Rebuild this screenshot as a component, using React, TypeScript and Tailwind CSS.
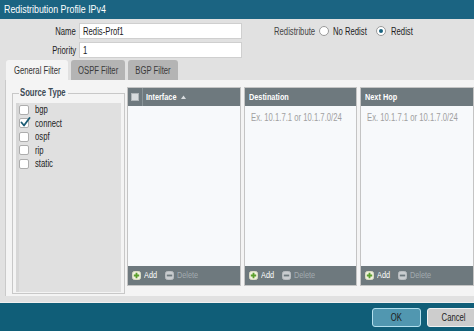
import React from "react";

function T({ children, o = "origin-left", className = "" }: { children: React.ReactNode; o?: string; className?: string }) {
  return <span className={`inline-block whitespace-nowrap scale-x-[0.77] ${o} ${className}`}>{children}</span>;
}

function Check({ checked }: { checked?: boolean }) {
  return (
    <div className="relative w-[10px] h-[10px] bg-white border border-[#adadad] rounded-[2px] shrink-0">
      {checked && (
        <svg className="absolute left-[0px] top-[-2px]" width="11" height="11" viewBox="0 0 11 11">
          <path d="M1.5 5.5 L4 8.5 L9.5 1" fill="none" stroke="#1b5c74" strokeWidth="1.8" strokeLinecap="round" strokeLinejoin="round" />
        </svg>
      )}
    </div>
  );
}

function Radio({ on }: { on?: boolean }) {
  return (
    <div className="w-[10px] h-[10px] rounded-full bg-white border border-[#9a9a9a] flex items-center justify-center shrink-0">
      {on && <div className="w-[4px] h-[4px] rounded-full bg-[#1a6480]" />}
    </div>
  );
}

function AddIcon() {
  return (
    <svg width="9" height="9" viewBox="0 0 9 9" className="shrink-0">
      <rect x="0.5" y="0.5" width="8" height="8" rx="2" fill="#f1f1de" stroke="#dcdcc4" />
      <path d="M4.5 1.8 V7.2 M1.8 4.5 H7.2" stroke="#5a9f2c" strokeWidth="1.8" />
    </svg>
  );
}

function DelIcon() {
  return (
    <svg width="9" height="9" viewBox="0 0 9 9" className="shrink-0">
      <rect x="0.5" y="0.5" width="8" height="8" rx="2" fill="#c9cdd0" stroke="#b9bdc0" />
      <path d="M1.8 4.5 H7.2" stroke="#6e797e" strokeWidth="1.8" />
    </svg>
  );
}

function Footer() {
  return (
    <div className="h-[19px] bg-[#6e797e] flex items-center pl-[4px] text-[9.5px]">
      <AddIcon />
      <span className="ml-[3px] w-[13px] inline-block">
        <T className="text-white">Add</T>
      </span>
      <span className="ml-[8px] inline-flex"><DelIcon /></span>
      <span className="ml-[3px] w-[20px] inline-block">
        <T className="text-[#a3abaf]">Delete</T>
      </span>
    </div>
  );
}

function Table({ title, placeholder, first, grow }: { title: string; placeholder?: string; first?: boolean; grow?: boolean }) {
  return (
    <div className={`${grow ? "flex-1 min-w-0" : first ? "w-[114px] shrink-0" : "w-[113px] shrink-0"} h-[199px] flex flex-col border border-[#c4c4c4] bg-[#f7f9fb] overflow-hidden`}>
      <div className="h-[18px] bg-[#6e797e] flex items-center text-white font-bold text-[9.5px]">
        {first ? (
          <>
            <div className="w-[8px] h-[8px] bg-[#d8dcde] border border-[#b0b6b9] ml-[3px] shrink-0" />
            <div className="w-[1px] h-[18px] bg-[#8a9599] ml-[3px] shrink-0" />
            <span className="ml-[3px] w-[30px] inline-block">
              <T>{title}</T>
            </span>
            <svg className="ml-[5px]" width="5" height="4" viewBox="0 0 5 4">
              <path d="M0 4 L2.5 0.5 L5 4 Z" fill="#d9dde0" />
            </svg>
          </>
        ) : (
          <span className="ml-[4px]">
            <T>{title}</T>
          </span>
        )}
      </div>
      <div className="flex-1 pl-[6px] pt-[5px] text-[10px] text-[#a0a0a0] leading-[14px]">
        {placeholder && <T>{placeholder}</T>}
      </div>
      <Footer />
    </div>
  );
}

export default function App() {
  return (
    <div className="w-[474px] h-[331px] bg-[#e1e1e1] flex flex-col overflow-hidden font-['Liberation_Sans',Arial,sans-serif]">
      <div className="h-[19px] bg-[#1b6482] text-white text-[11.5px] flex items-center pl-[4px] shrink-0">
        <T>Redistribution Profile IPv4</T>
      </div>
      <div className="flex mt-[4px] shrink-0">
        <div className="grid grid-cols-[76px_163px] gap-x-[3px] gap-y-[3px] text-[10px] text-[#222]">
          <div className="h-[16px] flex items-center justify-end">
            <T o="origin-right">Name</T>
          </div>
          <div className="h-[16px] bg-white border border-[#cfcfcf] flex items-center pl-[3px]">
            <T>Redis-Prof1</T>
          </div>
          <div className="h-[16px] flex items-center justify-end">
            <T o="origin-right">Priority</T>
          </div>
          <div className="h-[16px] bg-white border border-[#cfcfcf] flex items-center pl-[3px]">
            <T>1</T>
          </div>
        </div>
        <div className="ml-[32px] h-[16px] flex items-center text-[10px] text-[#222]">
          <span className="w-[41px] inline-block">
            <T className="text-[#444]">Redistribute</T>
          </span>
          <span className="ml-[4px] inline-flex"><Radio /></span>
          <span className="ml-[4px] w-[33px] inline-block">
            <T>No Redist</T>
          </span>
          <span className="ml-[10px] inline-flex"><Radio on /></span>
          <span className="ml-[5px] w-[21px] inline-block">
            <T>Redist</T>
          </span>
        </div>
      </div>
      <div className="h-[20px] mt-[2px] flex items-end pl-[6px] gap-[3px] text-[10px] shrink-0">
        <div className="w-[62px] h-[20px] bg-[#f4f4f4] rounded-t-[3px] flex items-center justify-center text-[#333]">
          <T o="origin-center">General Filter</T>
        </div>
        <div className="w-[54px] h-[20px] bg-[#b4b4b4] rounded-t-[3px] flex items-center justify-center text-[#3a3a3a]">
          <T o="origin-center">OSPF Filter</T>
        </div>
        <div className="w-[50px] h-[20px] bg-[#b4b4b4] rounded-t-[3px] flex items-center justify-center text-[#3a3a3a]">
          <T o="origin-center">BGP Filter</T>
        </div>
      </div>
      <div className="h-[216px] ml-[5px] bg-[#f4f4f4] border-l border-[#cacaca] flex pl-[6px] pt-[7px] shrink-0">
        <fieldset className="w-[113px] shrink-0 h-[207px] border border-[#c8c8c8] px-[3px] pt-[4px] pb-[1px]">
          <legend className="ml-[3px] px-[1px] text-[10px] leading-[12px] font-bold text-[#3c4a55]">
            <span className="w-[47px] inline-block">
              <T>Source Type</T>
            </span>
          </legend>
          <div className="h-[189px] bg-[#e0e0e0] border-l-[3px] border-[#d7d7d7] text-[10px] text-[#222]">
            {[
              ["bgp", false],
              ["connect", true],
              ["ospf", false],
              ["rip", false],
              ["static", false],
            ].map(([l, c]) => (
              <div key={l as string} className="h-[13.5px] flex items-center">
                <Check checked={c as boolean} />
                <span className="ml-[6px]">
                  <T>{l as string}</T>
                </span>
              </div>
            ))}
          </div>
        </fieldset>
        <div className="ml-[2px] flex gap-[3px] flex-1 min-w-0">
          <Table title="Interface" first />
          <Table title="Destination" placeholder="Ex. 10.1.7.1 or 10.1.7.0/24" />
          <Table title="Next Hop" placeholder="Ex. 10.1.7.1 or 10.1.7.0/24" grow />
        </div>
      </div>
      <div className="mt-[6px] h-[29px] bg-[#105e78] border-t border-[#f0f0f0] flex items-center justify-end shrink-0 text-[10px]">
        <div className="w-[49px] h-[19px] bg-[#5197b0] border border-[#b3e0ee] rounded-[3px] flex items-center justify-center text-[#1a1a1a]">
          <T o="origin-center">OK</T>
        </div>
        <div className="ml-[6px] -mr-[6px] w-[53px] h-[19px] bg-[#cdcdcd] border border-[#f2f2f2] rounded-[3px] flex items-center justify-center text-[#222]">
          <T o="origin-center">Cancel</T>
        </div>
      </div>
    </div>
  );
}
